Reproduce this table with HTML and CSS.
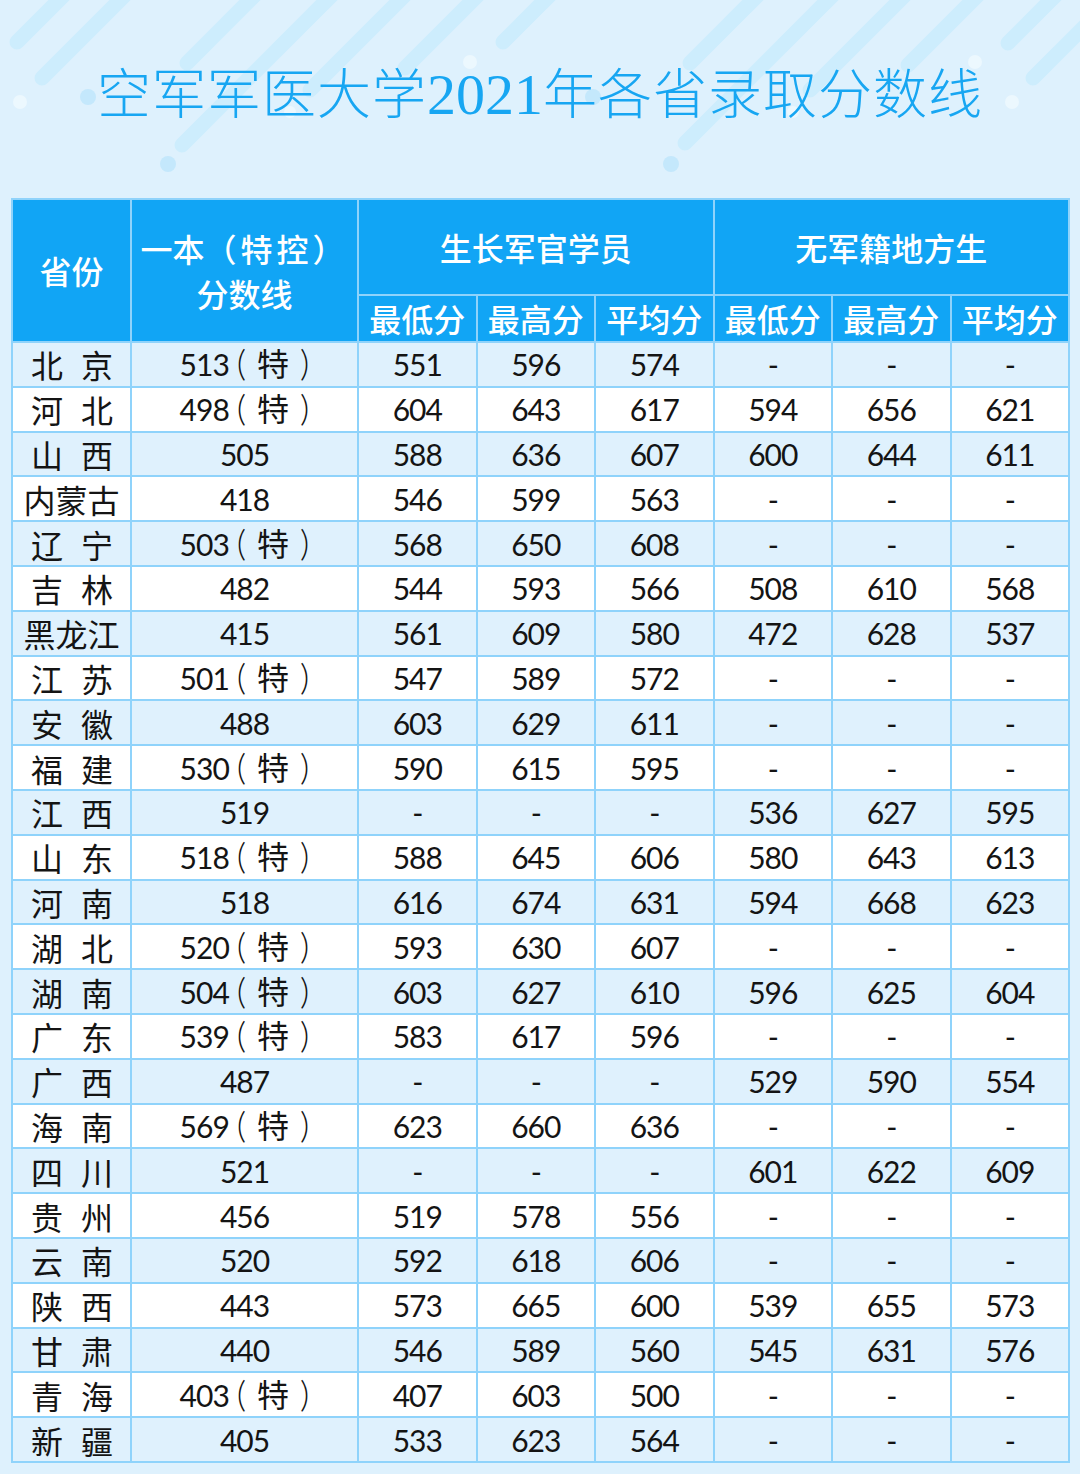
FILE: index.html
```html
<!DOCTYPE html>
<html lang="zh-CN">
<head>
<meta charset="utf-8">
<title>空军军医大学2021年各省录取分数线</title>
<link rel="stylesheet" href="styles.css">
</head>
<body>
<div class="hero">
  <svg class="deco" width="1080" height="199" viewBox="0 0 1080 199" aria-hidden="true">
    <g stroke="#cdedfd" stroke-width="15" stroke-linecap="round" fill="none">
      <line x1="17" y1="42" x2="70" y2="-11"/>
      <line x1="42" y1="78" x2="130" y2="-10"/>
      <line x1="187" y1="63" x2="260" y2="-10"/>
      <line x1="182" y1="145" x2="340" y2="-13"/>
      <line x1="310" y1="90" x2="410" y2="-10"/>
      <line x1="405" y1="68" x2="480" y2="-7"/>
      <line x1="503" y1="42" x2="560" y2="-15"/>
      <line x1="690" y1="63" x2="770" y2="-17"/>
      <line x1="685" y1="143" x2="840" y2="-12"/>
      <line x1="810" y1="90" x2="910" y2="-10"/>
      <line x1="908" y1="65" x2="990" y2="-17"/>
      <line x1="1008" y1="43" x2="1060" y2="-9"/>
      <line x1="1033" y1="78" x2="1120" y2="-9"/>
    </g>
    <g fill="#c4e8fc">
      <circle cx="88" cy="97" r="8"/>
      <circle cx="168" cy="164" r="8"/>
      <circle cx="593" cy="97" r="8"/>
      <circle cx="671" cy="164" r="8"/>
    </g>
    <g fill="#ecf8fe">
      <circle cx="20" cy="102" r="7"/>
      <circle cx="470" cy="62" r="7"/>
      <circle cx="290" cy="112" r="6"/>
      <circle cx="975" cy="62" r="7"/>
      <circle cx="1012" cy="102" r="7"/>
      <circle cx="793" cy="112" r="6"/>
    </g>
  </svg>
  <h1 class="title">空军军医大学<span class="yr">2021</span>年各省录取分数线</h1>
</div>

<table class="scores">
  <colgroup>
    <col class="c-prov"><col class="c-line">
    <col class="c-n"><col class="c-n"><col class="c-n">
    <col class="c-n"><col class="c-n"><col class="c-n">
  </colgroup>
  <thead>
    <tr class="hr1">
      <th rowspan="2">省份</th>
      <th rowspan="2">一本<span class="hp">（特控）</span><br>分数线</th>
      <th colspan="3">生长军官学员</th>
      <th colspan="3">无军籍地方生</th>
    </tr>
    <tr class="hr2">
      <th>最低分</th><th>最高分</th><th>平均分</th>
      <th>最低分</th><th>最高分</th><th>平均分</th>
    </tr>
  </thead>
  <tbody>
    <tr><td class="pv two">北京</td><td>513<span class="tk">(<span class="tc">特</span>)</span></td><td>551</td><td>596</td><td>574</td><td>-</td><td>-</td><td>-</td></tr>
    <tr><td class="pv two">河北</td><td>498<span class="tk">(<span class="tc">特</span>)</span></td><td>604</td><td>643</td><td>617</td><td>594</td><td>656</td><td>621</td></tr>
    <tr><td class="pv two">山西</td><td>505</td><td>588</td><td>636</td><td>607</td><td>600</td><td>644</td><td>611</td></tr>
    <tr><td class="pv">内蒙古</td><td>418</td><td>546</td><td>599</td><td>563</td><td>-</td><td>-</td><td>-</td></tr>
    <tr><td class="pv two">辽宁</td><td>503<span class="tk">(<span class="tc">特</span>)</span></td><td>568</td><td>650</td><td>608</td><td>-</td><td>-</td><td>-</td></tr>
    <tr><td class="pv two">吉林</td><td>482</td><td>544</td><td>593</td><td>566</td><td>508</td><td>610</td><td>568</td></tr>
    <tr><td class="pv">黑龙江</td><td>415</td><td>561</td><td>609</td><td>580</td><td>472</td><td>628</td><td>537</td></tr>
    <tr><td class="pv two">江苏</td><td>501<span class="tk">(<span class="tc">特</span>)</span></td><td>547</td><td>589</td><td>572</td><td>-</td><td>-</td><td>-</td></tr>
    <tr><td class="pv two">安徽</td><td>488</td><td>603</td><td>629</td><td>611</td><td>-</td><td>-</td><td>-</td></tr>
    <tr><td class="pv two">福建</td><td>530<span class="tk">(<span class="tc">特</span>)</span></td><td>590</td><td>615</td><td>595</td><td>-</td><td>-</td><td>-</td></tr>
    <tr><td class="pv two">江西</td><td>519</td><td>-</td><td>-</td><td>-</td><td>536</td><td>627</td><td>595</td></tr>
    <tr><td class="pv two">山东</td><td>518<span class="tk">(<span class="tc">特</span>)</span></td><td>588</td><td>645</td><td>606</td><td>580</td><td>643</td><td>613</td></tr>
    <tr><td class="pv two">河南</td><td>518</td><td>616</td><td>674</td><td>631</td><td>594</td><td>668</td><td>623</td></tr>
    <tr><td class="pv two">湖北</td><td>520<span class="tk">(<span class="tc">特</span>)</span></td><td>593</td><td>630</td><td>607</td><td>-</td><td>-</td><td>-</td></tr>
    <tr><td class="pv two">湖南</td><td>504<span class="tk">(<span class="tc">特</span>)</span></td><td>603</td><td>627</td><td>610</td><td>596</td><td>625</td><td>604</td></tr>
    <tr><td class="pv two">广东</td><td>539<span class="tk">(<span class="tc">特</span>)</span></td><td>583</td><td>617</td><td>596</td><td>-</td><td>-</td><td>-</td></tr>
    <tr><td class="pv two">广西</td><td>487</td><td>-</td><td>-</td><td>-</td><td>529</td><td>590</td><td>554</td></tr>
    <tr><td class="pv two">海南</td><td>569<span class="tk">(<span class="tc">特</span>)</span></td><td>623</td><td>660</td><td>636</td><td>-</td><td>-</td><td>-</td></tr>
    <tr><td class="pv two">四川</td><td>521</td><td>-</td><td>-</td><td>-</td><td>601</td><td>622</td><td>609</td></tr>
    <tr><td class="pv two">贵州</td><td>456</td><td>519</td><td>578</td><td>556</td><td>-</td><td>-</td><td>-</td></tr>
    <tr><td class="pv two">云南</td><td>520</td><td>592</td><td>618</td><td>606</td><td>-</td><td>-</td><td>-</td></tr>
    <tr><td class="pv two">陕西</td><td>443</td><td>573</td><td>665</td><td>600</td><td>539</td><td>655</td><td>573</td></tr>
    <tr><td class="pv two">甘肃</td><td>440</td><td>546</td><td>589</td><td>560</td><td>545</td><td>631</td><td>576</td></tr>
    <tr><td class="pv two">青海</td><td>403<span class="tk">(<span class="tc">特</span>)</span></td><td>407</td><td>603</td><td>500</td><td>-</td><td>-</td><td>-</td></tr>
    <tr><td class="pv two">新疆</td><td>405</td><td>533</td><td>623</td><td>564</td><td>-</td><td>-</td><td>-</td></tr>
  </tbody>
</table>
</body>
</html>
```

FILE: styles.css
```css
html, body {
  margin: 0;
  padding: 0;
}

body {
  width: 1080px;
  min-height: 1474px;
  background: #def1fd;
  font-family: "Noto Sans CJK SC", sans-serif;
}

.hero {
  position: relative;
  height: 198px;
}

.deco {
  position: absolute;
  left: 0;
  top: 0;
}

.title {
  position: relative;
  margin: 0;
  padding-top: 58px;
  text-align: center;
  font-family: "Noto Sans CJK SC", sans-serif;
  font-weight: 300;
  font-size: 54px;
  line-height: 66px;
  letter-spacing: 1px;
  color: #17a6f2;
}

.title .yr {
  font-family: "Liberation Serif", "Times New Roman", serif;
  font-weight: 400;
  font-size: 58px;
  letter-spacing: 0;
}

.scores {
  border-collapse: collapse;
  table-layout: fixed;
  width: 1057px;
  margin-left: 11px;
}

.c-prov { width: 119px; }
.c-line { width: 227px; }
.c-n { width: 118.5px; }

.scores th,
.scores td {
  border: 2px solid #8fd3fb;
  padding: 0;
  text-align: center;
  vertical-align: middle;
  white-space: nowrap;
}

.scores th {
  background: #11a5f5;
  color: #ffffff;
  font-family: "Noto Sans CJK SC", sans-serif;
  font-weight: 500;
  font-size: 32px;
  line-height: 45px;
}

.hr1 { height: 96px; }
.hr2 { height: 44px; }

.hr2 th {
  font-size: 32px;
  letter-spacing: 0;
}

.hp {
  letter-spacing: 4px;
}

.scores tbody tr { height: 44.8px; }

.scores td {
  font-family: "Lato", "Noto Sans CJK SC", sans-serif;
  font-size: 30px;
  line-height: 40px;
  letter-spacing: -1px;
  color: #141414;
}

.scores tbody tr:nth-child(odd) td { background: #dff1fd; }
.scores tbody tr:nth-child(even) td { background: #ffffff; }

.scores td.pv {
  font-family: "Noto Sans CJK SC", sans-serif;
  font-size: 32px;
  letter-spacing: 0;
}

.scores td.two {
  letter-spacing: 18px;
  text-indent: 18px;
}

.tk {
  font-family: "Lato", sans-serif;
  font-weight: 300;
  font-size: 36px;
  line-height: 30px;
  letter-spacing: 0;
  margin-left: 8px;
}

.tc {
  font-family: "Noto Sans CJK SC", sans-serif;
  font-weight: 400;
  font-size: 32px;
  margin: 0 11px;
}
```
